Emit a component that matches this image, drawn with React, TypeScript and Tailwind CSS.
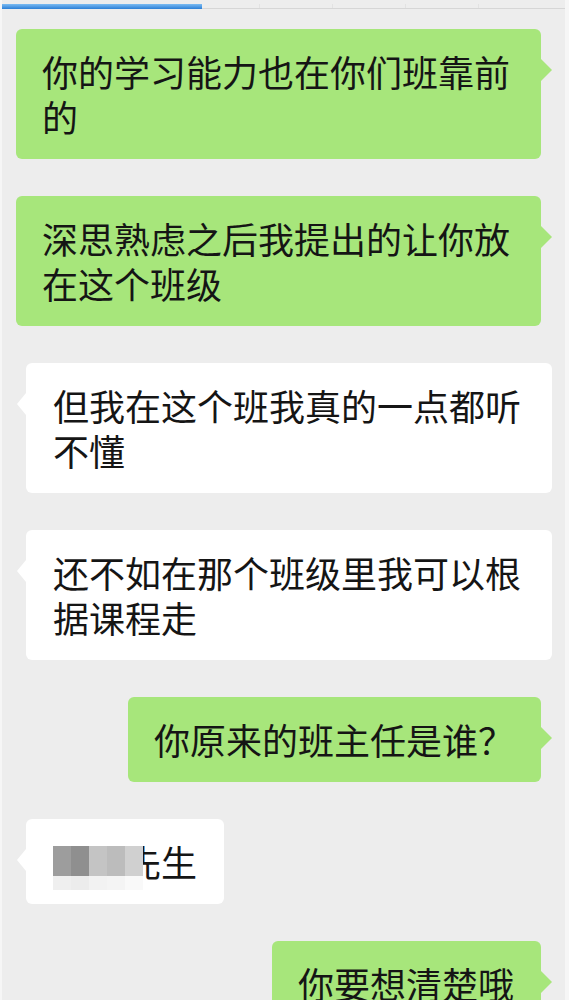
import React from "react";

type Msg = {
  side: "me" | "them";
  text: string;
  masked?: boolean;
};

const messages: Msg[] = [
  { side: "me", text: "你的学习能力也在你们班靠前的" },
  { side: "me", text: "深思熟虑之后我提出的让你放在这个班级" },
  { side: "them", text: "但我在这个班我真的一点都听不懂" },
  { side: "them", text: "还不如在那个班级里我可以根据课程走" },
  { side: "me", text: "你原来的班主任是谁？" },
  { side: "them", text: "某某先生", masked: true },
  { side: "me", text: "你要想清楚哦" },
];

const mosaicTop = ["#9d9d9d", "#8f8f8f", "#c4c4c4", "#bcbcbc", "#d0d0d0"];
const mosaicBottom = ["#efefef", "#ececec", "#f2f2f2", "#f4f4f4", "#f9f9f9"];

function Mosaic() {
  return (
    <span className="absolute left-0 top-[7px] flex w-[90px] flex-col">
      <span className="flex h-[30px]">
        {mosaicTop.map((c, i) => (
          <span key={i} className="h-full flex-1" style={{ backgroundColor: c }} />
        ))}
      </span>
      <span className="flex h-[14px]">
        {mosaicBottom.map((c, i) => (
          <span key={i} className="h-full flex-1" style={{ backgroundColor: c }} />
        ))}
      </span>
    </span>
  );
}

function Bubble({ msg }: { msg: Msg }) {
  if (msg.side === "me") {
    return (
      <div className="flex justify-end pl-[16px] pr-[28px]">
        <div className="relative rounded-[6px] bg-[#a7e67b] py-[20px] pl-[26px] pr-[27px]">
          <span className="absolute right-[-11px] top-[30px] h-0 w-0 border-y-[11px] border-l-[11px] border-y-transparent border-l-[#a7e67b]" />
          <p className="break-all">{msg.text}</p>
        </div>
      </div>
    );
  }

  return (
    <div className="flex justify-start pl-[26px] pr-[17px]">
      <div className="relative rounded-[6px] bg-white py-[20px] pl-[27px] pr-[27px]">
        <span className="absolute left-[-9px] top-[30px] h-0 w-0 border-y-[11px] border-r-[9px] border-y-transparent border-r-white" />
        <p className="relative break-all">
          {msg.text}
          {msg.masked && <Mosaic />}
        </p>
      </div>
    </div>
  );
}

export default function App() {
  return (
    <div
      className="min-h-screen w-[569px] bg-[#ededed] text-[36px] leading-[45px] text-[#151515] shadow-[inset_2px_0_0_#f6f6f6,inset_-4px_0_0_#f6f6f6]"
      style={{ fontFamily: '"Noto Sans CJK SC", "Noto Sans", sans-serif' }}
    >
      <div className="flex h-[29px] items-start pl-[2px] pr-[4px] pt-[4px]">
        <div className="h-[5px] w-[200px] bg-gradient-to-b from-[#7bbcf2] to-[#2a7fd6]" />
        <div className="flex h-[5px] flex-1 border-b border-[#d6d6d6]">
          <div className="w-[57px]" />
          <div className="w-[73px] border-l border-[#e2e2e2]" />
          <div className="w-[73px] border-l border-[#e2e2e2]" />
          <div className="w-[73px] border-l border-[#e2e2e2]" />
          <div className="flex-1 border-l border-[#e2e2e2]" />
        </div>
      </div>

      <div className="flex flex-col gap-[37px] pb-[40px]">
        {messages.map((m, i) => (
          <Bubble key={i} msg={m} />
        ))}
      </div>
    </div>
  );
}
